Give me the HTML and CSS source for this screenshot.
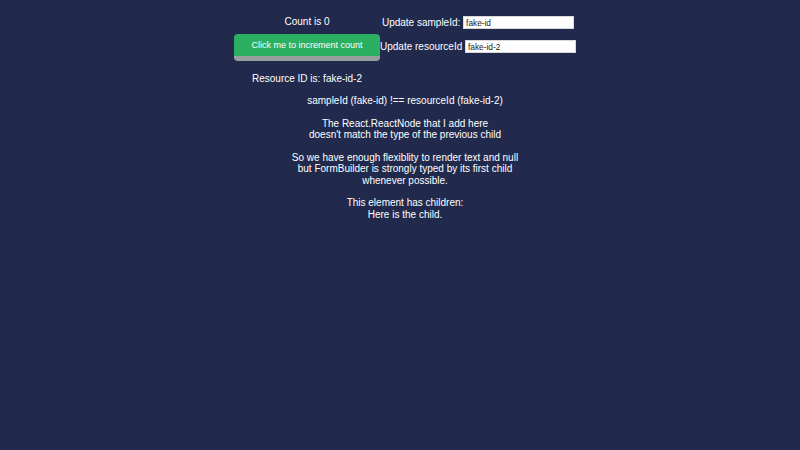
FILE: index.html
```html
<!DOCTYPE html>
<html>
<head>
<meta charset="utf-8">
<link rel="stylesheet" href="styles.css">
</head>
<body>
<div class="app">
  <div class="top">
    <div class="left">
      <div class="count">Count is 0</div>
      <button class="btn">Click me to increment count</button>
      <div class="resource">Resource ID is: fake-id-2</div>
    </div>
    <div class="right">
      <div class="row">Update sampleId:&nbsp;<input class="field" value="fake-id"></div>
      <div class="row">Update resourceId&nbsp;<input class="field" value="fake-id-2"></div>
    </div>
  </div>
  <div class="texts">
    <p>sampleId (fake-id) !== resourceId (fake-id-2)</p>
    <p>The React.ReactNode that I add here<br>doesn't match the type of the previous child</p>
    <p>So we have enough flexiblity to render text and null<br>but FormBuilder is strongly typed by its first child<br>whenever possible.</p>
    <p>This element has children:<br>Here is the child.</p>
  </div>
</div>
</body>
</html>
```
FILE: styles.css
```css
html, body {
  margin: 0;
  padding: 0;
  background: #212a4c;
  height: 100%;
}
body {
  font-family: "Liberation Sans", Arial, sans-serif;
  font-size: 10px;
  line-height: 11.5px;
  color: #ffffff;
}
.app {
  padding: 16px 0 0 10px;
  display: flex;
  flex-direction: column;
  align-items: center;
}
.top {
  display: flex;
  align-items: flex-start;
}
.left {
  width: 146px;
  display: flex;
  flex-direction: column;
  align-items: stretch;
  text-align: center;
}
.count {
  height: 11.5px;
}
.btn {
  margin-top: 6.5px;
  height: 27px;
  padding: 1px 0 0;
  border: none;
  border-bottom: 5px solid #979e9f;
  border-radius: 4px;
  background: #2bb062;
  color: #ffffff;
  font-family: "Liberation Sans", Arial, sans-serif;
  font-size: 9px;
  line-height: 11px;
  text-align: center;
}
.resource {
  margin-top: 12px;
}
.right {
  width: 196px;
  display: flex;
  flex-direction: column;
  align-items: center;
  padding-top: 0;
  gap: 11px;
}
.row {
  display: flex;
  align-items: center;
  height: 13px;
  white-space: nowrap;
}
.field {
  box-sizing: border-box;
  width: 111px;
  height: 13px;
  margin: 0;
  padding: 0 2px;
  border: 1px solid #d8d8d8;
  background: #ffffff;
  color: #1a1a1a;
  font-family: "Liberation Sans", Arial, sans-serif;
  font-size: 8.3px;
  outline: none;
}
.texts {
  margin-top: 10.5px;
  text-align: center;
}
.texts p {
  margin: 0 0 11px;
}
```
